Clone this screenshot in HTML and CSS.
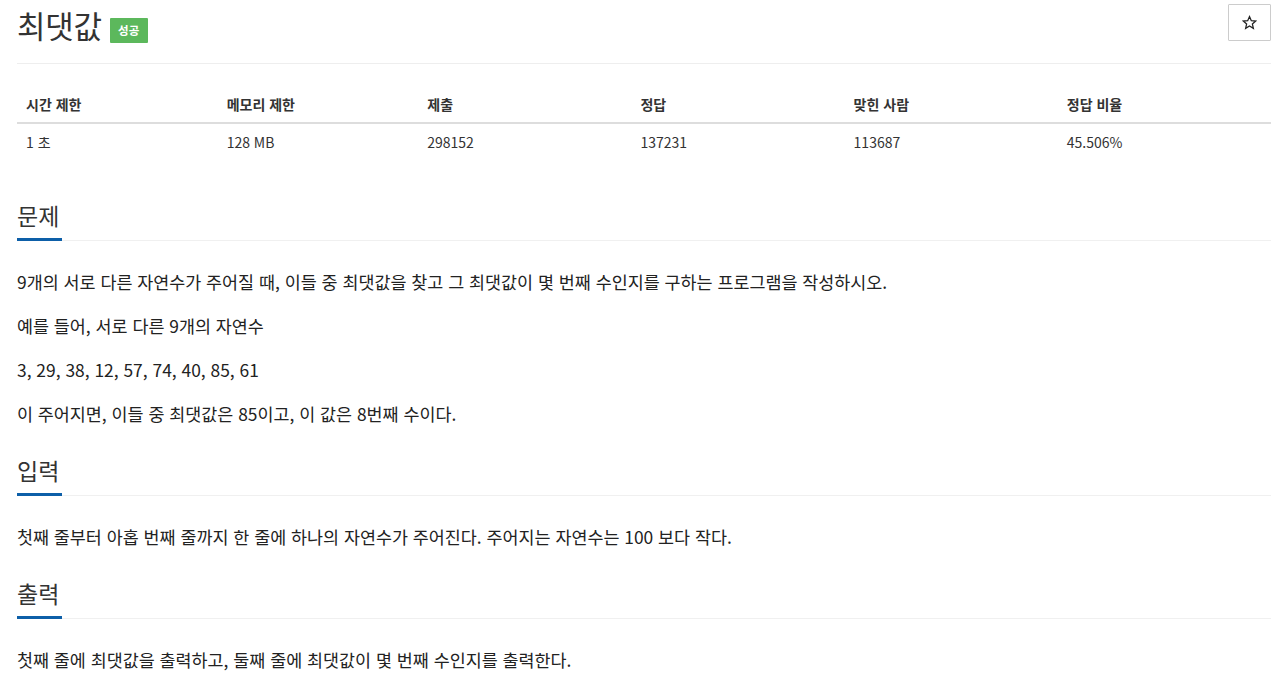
FILE: index.html
```html
<!DOCTYPE html>
<html lang="ko">
<head>
<meta charset="utf-8">
<title>최댓값</title>
<link rel="stylesheet" href="styles.css">
</head>
<body>
<div class="page">
  <div class="page-header">
    <h1 class="title">최댓값 <span class="badge">성공</span></h1>
    <button class="star-btn" type="button" aria-label="즐겨찾기">
      <svg width="15" height="15" viewBox="0 0 24 24"><path d="M12 2.5l2.9 6.6 7.1.6-5.4 4.7 1.6 7-6.2-3.7-6.2 3.7 1.6-7L2 9.7l7.1-.6z" fill="none" stroke="#222" stroke-width="2" stroke-linejoin="miter"/></svg>
    </button>
  </div>

  <table class="info">
    <thead>
      <tr><th class="c1">시간 제한</th><th class="c1">메모리 제한</th><th class="c2">제출</th><th class="c2">정답</th><th class="c2">맞힌 사람</th><th class="c2">정답 비율</th></tr>
    </thead>
    <tbody>
      <tr><td>1 초</td><td>128 MB</td><td>298152</td><td>137231</td><td>113687</td><td>45.506%</td></tr>
    </tbody>
  </table>

  <section class="problem-section">
    <div class="headline"><h2>문제</h2></div>
    <div class="text">
      <p>9개의 서로 다른 자연수가 주어질 때, 이들 중 최댓값을 찾고 그 최댓값이 몇 번째 수인지를 구하는 프로그램을 작성하시오.</p>
      <p>예를 들어, 서로 다른 9개의 자연수</p>
      <p>3, 29, 38, 12, 57, 74, 40, 85, 61</p>
      <p>이 주어지면, 이들 중 최댓값은 85이고, 이 값은 8번째 수이다.</p>
    </div>
  </section>

  <section class="problem-section">
    <div class="headline"><h2>입력</h2></div>
    <div class="text">
      <p>첫째 줄부터 아홉 번째 줄까지 한 줄에 하나의 자연수가 주어진다. 주어지는 자연수는 100 보다 작다.</p>
    </div>
  </section>

  <section class="problem-section">
    <div class="headline"><h2>출력</h2></div>
    <div class="text">
      <p>첫째 줄에 최댓값을 출력하고, 둘째 줄에 최댓값이 몇 번째 수인지를 출력한다.</p>
    </div>
  </section>
</div>
</body>
</html>
```

FILE: styles.css
```css
* { box-sizing: border-box; }
html, body {
  margin: 0;
  padding: 0;
  background: #fff;
  color: #333;
  font-family: "Noto Sans CJK KR", "Noto Sans", sans-serif;
}
.page {
  padding: 0 9px 0 17px;
}
.page-header {
  display: flex;
  justify-content: space-between;
  align-items: flex-start;
  height: 64px;
  border-bottom: 1px solid #eee;
}
.title {
  margin: 0;
  font-size: 31px;
  font-weight: 400;
  line-height: 50px;
  color: #333;
  display: flex;
  align-items: center;
  gap: 8px;
  letter-spacing: -0.3px;
}
.badge {
  display: inline-flex;
  align-items: center;
  justify-content: center;
  width: 38px;
  height: 25px;
  margin-top: 10px;
  background: #5cb85c;
  color: #fff;
  font-size: 11.5px;
  font-weight: 700;
  letter-spacing: 0;
  border-radius: 1px;
}
.star-btn {
  margin-top: 4px;
  width: 43px;
  height: 37px;
  background: #fff;
  border: 1px solid #ccc;
  border-radius: 1px;
  display: flex;
  align-items: center;
  justify-content: center;
  padding: 0;
}
.info {
  width: 100%;
  margin-top: 22px;
  border-collapse: collapse;
  font-size: 14px;
  color: #333;
}
.info .c1 { width: 16%; }
.info .c2 { width: 17%; }
.info th, .info td {
  text-align: left;
  padding: 8px 9px;
  line-height: 20px;
}
.info th {
  font-weight: 700;
  border-bottom: 2px solid #ddd;
}
.problem-section {
  margin-top: 40px;
}
.problem-section + .problem-section {
  margin-top: 28px;
}
.headline {
  border-bottom: 1px solid #f0f0f0;
  display: flex;
}
.headline h2 {
  margin: 0 0 -1px 0;
  font-size: 23px;
  font-weight: 400;
  line-height: 30px;
  padding-bottom: 8px;
  border-bottom: 3px solid #0d5fa8;
  color: #333;
  width: 45px;
}
.text {
  padding-top: 28px;
}
.text p {
  margin: 0 0 18px 0;
  font-size: 17.4px;
  line-height: 26px;
  color: #222;
}
.text p:last-child {
  margin-bottom: 0;
}
```
